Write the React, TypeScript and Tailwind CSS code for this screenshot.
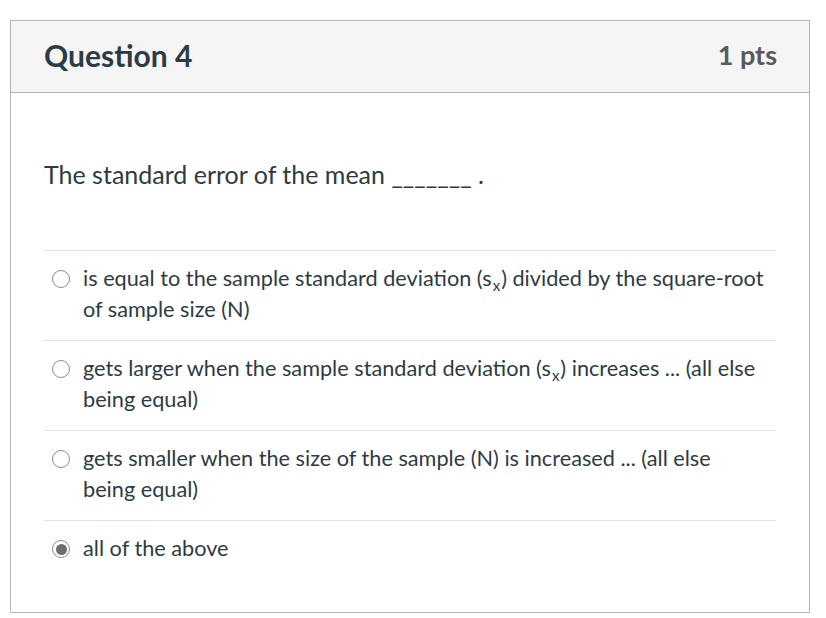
const Sub = () => (
  <span className="relative top-[5px] px-[1px] text-[15px] leading-none">x</span>
);

const answers = [
  { id: "a", text: <>is equal to the sample standard deviation (s<Sub />) divided by the square-root of sample size (N)</>, checked: false },
  { id: "b", text: <>gets larger when the sample standard deviation (s<Sub />) increases ... (all else being equal)</>, checked: false },
  { id: "c", text: <>gets smaller when the size of the sample (N) is increased ... (all else being equal)</>, checked: false },
  { id: "d", text: <>all of the above</>, checked: true },
];

const Radio = ({ checked }: { checked: boolean }) => (
  <span className="mt-[7px] flex h-[18px] w-[18px] shrink-0 items-center justify-center rounded-full border border-[#8c8c8c] bg-white">
    {checked && <span className="h-[11px] w-[11px] rounded-full bg-[#6e6e6e]" />}
  </span>
);

const App = () => {
  return (
    <div className="min-h-screen bg-white pl-[10px] pt-[20px] font-['Lato','Liberation_Sans',sans-serif] text-[#2d3b45]">
      <div className="w-[800px] h-[593px] border border-[#b5b5b5] flex flex-col">
        <div className="h-[72px] shrink-0 flex items-center justify-between bg-[#f5f5f5] border-b border-[#b5b5b5] pl-[33px] pr-[32px] pb-[4px]">
          <h2 className="text-[30px] font-bold leading-none">Question 4</h2>
          <span className="text-[27px] font-bold leading-none text-[#5b5b5b]">1 pts</span>
        </div>

        <div className="px-[33px] pt-[66px]">
          <p className="text-[25px] leading-[31px] mb-[60px]">The standard error of the mean _______ .</p>

          <div className="flex flex-col">
            {answers.map((a) => (
              <div key={a.id} className="flex gap-[13px] border-t border-[#e3e3e3] pl-[8px] pr-[10px] pt-3 pb-[15px]">
                <Radio checked={a.checked} />
                <span className="text-[21.7px] leading-[31px]">{a.text}</span>
              </div>
            ))}
          </div>
        </div>
      </div>
    </div>
  );
};

export default App;
